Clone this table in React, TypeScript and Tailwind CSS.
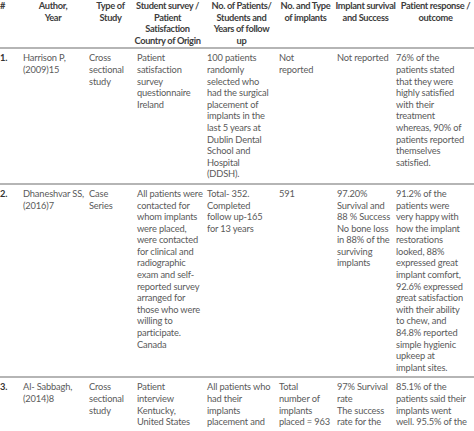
const headers: { lines: string[]; cls: string }[] = [
  { lines: ["#"], cls: "items-start" },
  { lines: ["Author,", "Year"], cls: "items-center pr-[6px]" },
  { lines: ["Type of", "Study"], cls: "items-center pr-[5px]" },
  {
    lines: ["Student survey /", "Patient", "Satisfaction", "Country of Origin"],
    cls: "items-center pr-[9px]",
  },
  {
    lines: ["No. of Patients/", "Students and", "Years of follow", "up"],
    cls: "items-center pr-[3px]",
  },
  { lines: ["No. and Type", "of implants"], cls: "items-center pr-[5px]" },
  { lines: ["Implant survival", "and Success"], cls: "items-center pr-[2px]" },
  { lines: ["Patient response /", "outcome"], cls: "items-center pl-[1px]" },
];

const rows: string[][][] = [
  [
    ["1."],
    ["Harrison P,", "(2009)15"],
    ["Cross", "sectional", "study"],
    ["Patient", "satisfaction", "survey", "questionnaire", "Ireland"],
    [
      "100 patients",
      "randomly",
      "selected who",
      "had the surgical",
      "placement of",
      "implants in the",
      "last 5 years at",
      "Dublin Dental",
      "School and",
      "Hospital",
      "(DDSH).",
    ],
    ["Not", "reported"],
    ["Not reported"],
    [
      "76% of the",
      "patients stated",
      "that they were",
      "highly satisfied",
      "with their",
      "treatment",
      "whereas, 90% of",
      "patients reported",
      "themselves",
      "satisfied.",
    ],
  ],
  [
    ["2."],
    ["Dhaneshvar SS,", "(2016)7"],
    ["Case", "Series"],
    [
      "All patients were",
      "contacted for",
      "whom implants",
      "were placed,",
      "were contacted",
      "for clinical and",
      "radiographic",
      "exam and self-",
      "reported survey",
      "arranged for",
      "those who were",
      "willing to",
      "participate.",
      "Canada",
    ],
    ["Total- 352.", "Completed", "follow up-165", "for 13 years"],
    ["591"],
    [
      "97.20%",
      "Survival and",
      "88 % Success",
      "No bone loss",
      "in 88% of the",
      "surviving",
      "implants",
    ],
    [
      "91.2% of the",
      "patients were",
      "very happy with",
      "how the implant",
      "restorations",
      "looked, 88%",
      "expressed great",
      "implant comfort,",
      "92.6% expressed",
      "great satisfaction",
      "with their ability",
      "to chew, and",
      "84.8% reported",
      "simple hygienic",
      "upkeep at",
      "implant sites.",
    ],
  ],
  [
    ["3."],
    ["Al- Sabbagh,", "(2014)8"],
    ["Cross", "sectional", "study"],
    ["Patient", "interview", "Kentucky,", "United States"],
    ["All patients who", "had their", "implants", "placement and"],
    ["Total", "number of", "implants", "placed = 963"],
    ["97% Survival", "rate", "The success", "rate for the"],
    ["85.1% of the", "patients said their", "implants went", "well. 95.5% of the"],
  ],
];

const grid = "grid grid-cols-[23px_66px_48px_70px_72px_58px_59px_78px]";

export default function App() {
  return (
    <div
      className="h-[431px] w-[474px] overflow-hidden bg-white"
      style={{ fontFamily: "Lato, 'Open Sans', sans-serif" }}
    >
      <div
        className={`${grid} text-[9.3px] leading-[11.6px] font-bold tracking-[-0.35px] text-[#3d3d3d]`}
      >
        {headers.map((h, i) => (
          <div key={i} className={`flex flex-col ${h.cls}`}>
            {h.lines.map((line, l) => (
              <div key={l} className="whitespace-nowrap">
                {line}
              </div>
            ))}
          </div>
        ))}
      </div>
      {rows.map((row, r) => (
        <div
          key={r}
          className={`${grid} mt-[1px] border-t-2 border-[#b5b5b5] pt-[3px] pb-[2px] text-[9.3px] leading-[11.6px] tracking-[-0.15px] text-[#5a5a5a]`}
        >
          {row.map((cell, c) => (
            <div key={c} className={c === 0 ? "font-bold text-[#333]" : ""}>
              {cell.map((line, l) => (
                <div key={l} className="whitespace-nowrap">
                  {line}
                </div>
              ))}
            </div>
          ))}
        </div>
      ))}
    </div>
  );
}
